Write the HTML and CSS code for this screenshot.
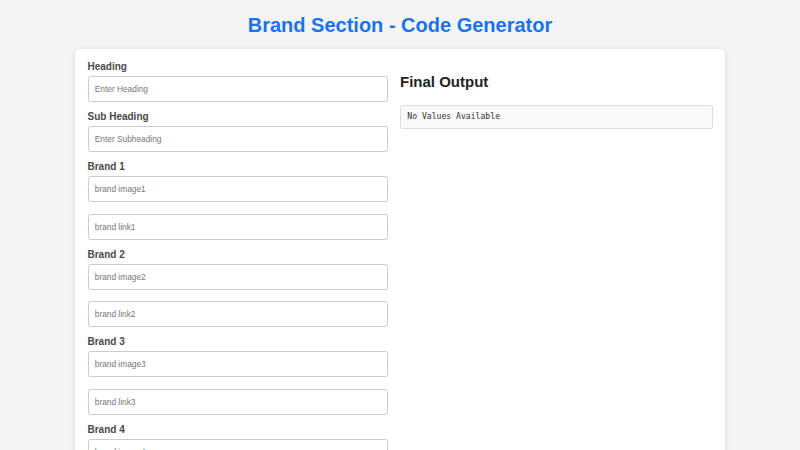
FILE: index.html
```html
<!DOCTYPE html>
<html lang="en">
<head>
<meta charset="utf-8">
<title>Brand Section - Code Generator</title>
<link rel="stylesheet" href="styles.css">
</head>
<body>
<h1 class="title">Brand Section - Code Generator</h1>
<div class="card">
  <div class="form-col">
    <div class="group">
      <label class="label">Heading</label>
      <input class="input" type="text" placeholder="Enter Heading">
    </div>
    <div class="group">
      <label class="label">Sub Heading</label>
      <input class="input" type="text" placeholder="Enter Subheading">
    </div>
    <div class="group">
      <label class="label">Brand 1</label>
      <input class="input" type="text" placeholder="brand image1">
      <input class="input" type="text" placeholder="brand link1">
    </div>
    <div class="group">
      <label class="label">Brand 2</label>
      <input class="input" type="text" placeholder="brand image2">
      <input class="input" type="text" placeholder="brand link2">
    </div>
    <div class="group">
      <label class="label">Brand 3</label>
      <input class="input" type="text" placeholder="brand image3">
      <input class="input" type="text" placeholder="brand link3">
    </div>
    <div class="group">
      <label class="label">Brand 4</label>
      <input class="input" type="text" placeholder="brand image4">
      <input class="input" type="text" placeholder="brand link4">
    </div>
    <div class="group">
      <label class="label">Brand 5</label>
      <input class="input" type="text" placeholder="brand image5">
      <input class="input" type="text" placeholder="brand link5">
    </div>
  </div>
  <div class="output-col">
    <h2 class="output-title">Final Output</h2>
    <pre class="output">No Values Available</pre>
  </div>
</div>
</body>
</html>
```

FILE: styles.css
```css
html, body {
  margin: 0;
  padding: 0;
  background: #f4f4f4;
  font-family: "Liberation Sans", Arial, sans-serif;
}

.title {
  margin: 13px 0 12px;
  text-align: center;
  font-size: 20px;
  line-height: 24px;
  font-weight: bold;
  color: #1a73e8;
}

.card {
  width: 650px;
  box-sizing: border-box;
  margin: 0 auto;
  padding: 12px 12.5px 12.5px;
  background: #fff;
  border-radius: 5px;
  box-shadow: 0 1px 6px rgba(0, 0, 0, 0.1);
  display: grid;
  grid-template-columns: 300px 1fr;
  column-gap: 12.5px;
  align-items: start;
}

.form-col {
  display: flex;
  flex-direction: column;
  gap: 8.75px;
}

.group {
  display: flex;
  flex-direction: column;
}

.label {
  display: block;
  font-size: 10px;
  line-height: 11.5px;
  font-weight: bold;
  color: #4a4a4a;
  margin-bottom: 3.5px;
}

.input {
  display: block;
  width: 100%;
  height: 26.25px;
  box-sizing: border-box;
  padding: 0 6.25px;
  border: 1px solid #ccc;
  border-radius: 2.5px;
  font-family: "Liberation Sans", Arial, sans-serif;
  font-size: 8.33px;
  color: #333;
  background: #fff;
}

.input::placeholder {
  color: #777;
}

.input + .input {
  margin-top: 11.25px;
}

.output-col {
  display: flex;
  flex-direction: column;
}

.output-title {
  margin: 12.3px 0 13.7px;
  font-size: 15px;
  line-height: 18px;
  font-weight: bold;
  color: #222;
}

.output {
  margin: 0;
  padding: 6.25px;
  background: #f9f9f9;
  border: 1px solid #ddd;
  border-radius: 2.5px;
  font-family: "DejaVu Sans Mono", "Liberation Mono", monospace;
  font-size: 8.125px;
  line-height: 9.5px;
  color: #333;
}
```
